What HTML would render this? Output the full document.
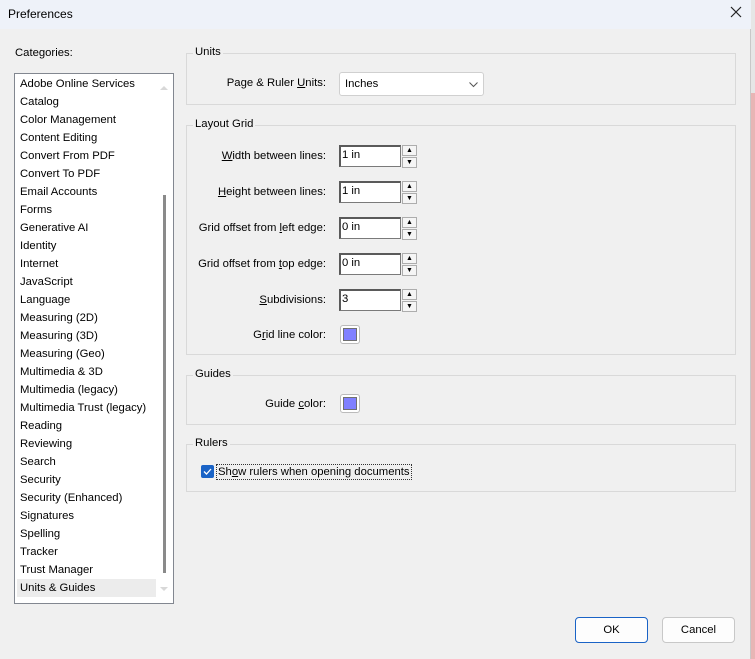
<!DOCTYPE html>
<html><head><style>
*{box-sizing:border-box;margin:0;padding:0}
body{width:755px;height:659px;background:#f3e9ea;font-family:"Liberation Sans",sans-serif;font-size:11.3px;color:#000;position:relative;overflow:hidden}
.dlg{position:absolute;left:0;top:0;width:751px;height:659px;background:#f0f0f0;border-right:1px solid #c8c8c8}
.tb{position:absolute;left:0;top:0;width:751px;height:29px;background:#eef2f9}
.a{position:absolute;white-space:nowrap}
.fs{position:absolute;border:1px solid #d9d9d9}
.lg{position:absolute;background:#f0f0f0;padding:0 2px;top:-8px;left:6px}
.lbl{position:absolute;right:424px;text-align:right;white-space:nowrap}
.inp{position:absolute;left:339px;width:62px;height:22px;background:#fff;border:1px solid #7a7a7a;border-top:2px solid #5a5a5a;border-left:2px solid #5a5a5a;padding:2px 0 0 1px}
.sp{position:absolute;left:402px;width:15px;height:23px}
.sp div{height:11px;border:1px solid #adadad;background:#f5f5f5;font-size:7px;text-align:center;line-height:10px;margin-bottom:1px}
.sw{position:absolute;left:340px;width:20px;height:19px;border:1px solid #bbb;border-radius:3px;background:#fff;padding:2px}
.sw div{width:14px;height:13px;background:#8080ff;border:1px solid #707070}
.li{position:absolute;left:20px;height:18px;line-height:18px}
.btn{position:absolute;top:617px;height:26px;width:73px;border:1px solid #c8c8c8;border-radius:4px;background:#fdfdfd;text-align:center;line-height:24px}
u{text-decoration:underline}
</style></head><body>
<div style="position:absolute;left:751px;top:0;width:4px;height:93px;background:#e6e6e6"></div>
<div style="position:absolute;left:751px;top:93px;width:4px;height:566px;background:#e8b5b5"></div>
<div class="dlg">
<div class="tb"></div>
<div class="a" style="left:8px;top:7px;font-size:12px">Preferences</div>
<svg class="a" style="left:730px;top:6px" width="12" height="12"><path d="M1 1L11 11M11 1L1 11" stroke="#222" stroke-width="1.2"/></svg>
<div class="a" style="left:15px;top:47px">Categories:</div>
<div class="a" style="left:14px;top:73px;width:160px;height:531px;background:#fff;border:1px solid #828790;overflow:hidden">
<div style="position:absolute;left:2px;top:505px;width:139px;height:18px;background:#ececec"></div>
<div style="position:absolute;left:148px;top:121px;width:3px;height:378px;background:#8a8a8a"></div>
<div style="position:absolute;left:145px;top:8px;width:0;height:0;border:4px solid transparent;border-bottom:4px solid #d8d8d8"></div>
<div style="position:absolute;left:145px;top:513px;width:0;height:0;border:4px solid transparent;border-top:4px solid #d8d8d8"></div>
</div>
<div class="a" style="left:0;top:75px">
<div class="li" style="top:0">Adobe Online Services</div>
<div class="li" style="top:18px">Catalog</div>
<div class="li" style="top:36px">Color Management</div>
<div class="li" style="top:54px">Content Editing</div>
<div class="li" style="top:72px">Convert From PDF</div>
<div class="li" style="top:90px">Convert To PDF</div>
<div class="li" style="top:108px">Email Accounts</div>
<div class="li" style="top:126px">Forms</div>
<div class="li" style="top:144px">Generative AI</div>
<div class="li" style="top:162px">Identity</div>
<div class="li" style="top:180px">Internet</div>
<div class="li" style="top:198px">JavaScript</div>
<div class="li" style="top:216px">Language</div>
<div class="li" style="top:234px">Measuring (2D)</div>
<div class="li" style="top:252px">Measuring (3D)</div>
<div class="li" style="top:270px">Measuring (Geo)</div>
<div class="li" style="top:288px">Multimedia &amp; 3D</div>
<div class="li" style="top:306px">Multimedia (legacy)</div>
<div class="li" style="top:324px">Multimedia Trust (legacy)</div>
<div class="li" style="top:342px">Reading</div>
<div class="li" style="top:360px">Reviewing</div>
<div class="li" style="top:378px">Search</div>
<div class="li" style="top:396px">Security</div>
<div class="li" style="top:414px">Security (Enhanced)</div>
<div class="li" style="top:432px">Signatures</div>
<div class="li" style="top:450px">Spelling</div>
<div class="li" style="top:468px">Tracker</div>
<div class="li" style="top:486px">Trust Manager</div>
<div class="li" style="top:504px">Units &amp; Guides</div>
</div>

<div class="fs" style="left:186px;top:53px;width:550px;height:52px"><span class="lg">Units</span></div>
<div class="fs" style="left:186px;top:125px;width:550px;height:230px"><span class="lg">Layout Grid</span></div>
<div class="fs" style="left:186px;top:375px;width:550px;height:50px"><span class="lg">Guides</span></div>
<div class="fs" style="left:186px;top:444px;width:550px;height:48px"><span class="lg">Rulers</span></div>

<div class="lbl" style="top:77px">Page &amp; Ruler <u>U</u>nits:</div>
<div class="a" style="left:339px;top:72px;width:145px;height:24px;background:#fff;border:1px solid #d0d0d0;border-radius:3px;padding:5px 0 0 5px">Inches
<svg style="position:absolute;right:5px;top:9px" width="9" height="6"><path d="M0.5 0.5L4.5 4.5L8.5 0.5" stroke="#555" fill="none"/></svg></div>

<div class="lbl" style="top:150px"><u>W</u>idth between lines:</div>
<div class="inp" style="top:145px">1 in</div><div class="sp" style="top:145px"><div>▲</div><div>▼</div></div>
<div class="lbl" style="top:186px"><u>H</u>eight between lines:</div>
<div class="inp" style="top:181px">1 in</div><div class="sp" style="top:181px"><div>▲</div><div>▼</div></div>
<div class="lbl" style="top:222px">Grid offset from <u>l</u>eft edge:</div>
<div class="inp" style="top:217px">0 in</div><div class="sp" style="top:217px"><div>▲</div><div>▼</div></div>
<div class="lbl" style="top:258px">Grid offset from <u>t</u>op edge:</div>
<div class="inp" style="top:253px">0 in</div><div class="sp" style="top:253px"><div>▲</div><div>▼</div></div>
<div class="lbl" style="top:294px"><u>S</u>ubdivisions:</div>
<div class="inp" style="top:289px">3</div><div class="sp" style="top:289px"><div>▲</div><div>▼</div></div>
<div class="lbl" style="top:329px">G<u>r</u>id line color:</div>
<div class="sw" style="top:325px"><div></div></div>
<div class="lbl" style="top:398px">Guide <u>c</u>olor:</div>
<div class="sw" style="top:394px"><div></div></div>

<div class="a" style="left:201px;top:465px;width:13px;height:13px;background:#1a63c6;border-radius:2px">
<svg width="13" height="13"><path d="M3 6.5L5.5 9L10 4" stroke="#fff" stroke-width="1.3" fill="none"/></svg></div>
<div class="a" style="left:216px;top:464px;border:1px dotted #333;padding:0 1px;line-height:14px">Sh<u>o</u>w rulers when opening documents</div>

<div class="btn" style="left:575px;border:1px solid #1a63c6">OK</div>
<div class="btn" style="left:662px">Cancel</div>
</div>
</body></html>
